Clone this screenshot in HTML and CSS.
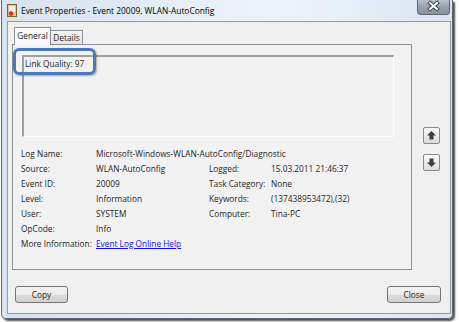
FILE: index.html
```html
<!DOCTYPE html>
<html>
<head>
<meta charset="utf-8">
<link rel="stylesheet" href="styles.css">
</head>
<body>
<div class="window">
  <div class="titlebar">
    <svg class="app-icon" width="10" height="13" viewBox="0 0 10 13">
      <rect x="0.5" y="0.5" width="9" height="12" fill="#d9c58e" stroke="#7d6428"/>
      <rect x="2" y="2" width="6" height="6" fill="#f4f0e6"/>
      <circle cx="4" cy="9.5" r="2.2" fill="#d8262b"/>
    </svg>
    <span class="title">Event Properties - Event 20009, WLAN-AutoConfig</span>
    <div class="close-btn">
      <svg width="33" height="15" viewBox="0 0 33 15">
        <path d="M13 4 L20 10 M20 4 L13 10" stroke="#3b4048" stroke-width="4" stroke-linecap="square"/>
        <path d="M13 4 L20 10 M20 4 L13 10" stroke="#ffffff" stroke-width="2" stroke-linecap="square"/>
      </svg>
    </div>
  </div>
  <div class="client">
    <div class="main">
      <div class="tabs-area">
        <div class="tabstrip">
          <div class="tab active">General</div>
          <div class="tab">Details</div>
        </div>
        <div class="panel">
          <div class="desc">Link Quality: 97</div>
          <div class="fields">
            <span class="lbl">Log Name:</span><span class="val span3">Microsoft-Windows-WLAN-AutoConfig/Diagnostic</span>
            <span class="lbl">Source:</span><span class="val">WLAN-AutoConfig</span><span class="lbl">Logged:</span><span class="val">15.03.2011 21:46:37</span>
            <span class="lbl">Event ID:</span><span class="val">20009</span><span class="lbl">Task Category:</span><span class="val">None</span>
            <span class="lbl">Level:</span><span class="val">Information</span><span class="lbl">Keywords:</span><span class="val">(137438953472),(32)</span>
            <span class="lbl">User:</span><span class="val">SYSTEM</span><span class="lbl">Computer:</span><span class="val">Tina-PC</span>
            <span class="lbl">OpCode:</span><span class="val span3">Info</span>
            <span class="lbl">More Information:</span><span class="val span3"><a class="link" href="#">Event Log Online Help</a></span>
          </div>
          <div class="highlight"></div>
        </div>
      </div>
      <div class="nav">
        <div class="nav-btn">
          <svg width="9" height="9" viewBox="0 0 9 9"><polygon points="4.5,0 9,4.5 6.5,4.5 6.5,8.5 2.5,8.5 2.5,4.5 0,4.5" fill="#3e3e3e"/></svg>
        </div>
        <div class="nav-btn">
          <svg width="9" height="9" viewBox="0 0 9 9"><polygon points="4.5,9 9,4.5 6.5,4.5 6.5,0.5 2.5,0.5 2.5,4.5 0,4.5" fill="#3e3e3e"/></svg>
        </div>
      </div>
    </div>
    <div class="buttons">
      <div class="btn copy">Copy</div>
      <div class="btn close">Close</div>
    </div>
  </div>
</div>
</body>
</html>
```

FILE: styles.css
```css
* { box-sizing: border-box; }
html, body {
  margin: 0;
  padding: 0;
  width: 459px;
  height: 322px;
  overflow: hidden;
  background: #ffffff;
}
body {
  font-family: "Open Sans", "Noto Sans", sans-serif;
  font-size: 8.3px;
  color: #1e1e1e;
}
.window {
  margin-left: 1px;
  width: 452px;
  height: 319px;
  border: 1px solid #5c6672;
  border-top: none;
  border-radius: 0 0 5px 5px;
  background: linear-gradient(90deg, #d7e3ef 0%, #e6eef7 40%, #eef4fa 60%, #dbe6f1 100%);
  box-shadow: 2px 2px 2px rgba(0, 0, 0, 0.7);
  display: flex;
  flex-direction: column;
}
.titlebar {
  height: 21px;
  display: flex;
  align-items: center;
  padding-left: 5px;
}
.app-icon { display: block; flex: none; }
.title {
  margin-left: 4px;
  color: #000;
  font-size: 8.4px;
}
.close-btn {
  margin-left: auto;
  margin-right: 2px;
  align-self: flex-start;
  width: 33px;
  height: 15px;
  border: 1px solid #5d6670;
  border-top: none;
  border-radius: 0 0 4px 4px;
  background: linear-gradient(#b9c0c9, #98a1ad 50%, #8a94a1);
}
.close-btn svg { display: block; margin: -1px 0 0 -1px; }
.client {
  margin: 0 1px 4px 5px;
  flex: 1;
  border: 1px solid #8f9bab;
  background: #f0f0f0;
  padding: 5px 9px 10px 4px;
  display: flex;
  flex-direction: column;
}
.main { display: flex; }
.tabs-area { width: 400px; }
.tabstrip {
  display: flex;
  align-items: flex-end;
  height: 17px;
  padding-left: 2px;
}
.tab {
  height: 14px;
  width: 32px;
  border: 1px solid #8c8f96;
  border-bottom: none;
  border-left: none;
  background: linear-gradient(#f4f4f4, #e4e4e4);
  display: flex;
  align-items: center;
  justify-content: center;
  line-height: 12px;
}
.tab.active {
  height: 18px;
  width: 37px;
  margin-bottom: -1px;
  border-left: 1px solid #8c8f96;
  background: #f9f9f9;
  position: relative;
  z-index: 1;
  padding-bottom: 2px;
}
.panel {
  height: 226px;
  border: 1px solid #8c8f96;
  background: #f2f2f2;
  position: relative;
  padding: 10px 0 0 9px;
}
.desc {
  width: 372px;
  height: 82px;
  border-top: 2px solid #a0a0a0;
  border-left: 2px solid #a0a0a0;
  border-right: 1px solid #fcfcfc;
  border-bottom: 1px solid #fcfcfc;
  padding: 0 0 0 1px;
  line-height: 13px;
}
.fields {
  margin-top: 9px;
  margin-left: -1px;
  display: grid;
  grid-template-columns: 75px 113px 62px auto;
  line-height: 15px;
  white-space: nowrap;
}
.span3 { grid-column: span 3; }
.link { color: #1414e6; text-decoration: underline; }
.highlight {
  position: absolute;
  left: 0;
  top: 3px;
  width: 83px;
  height: 27px;
  border: 3px solid #4a79b6;
  border-radius: 6px;
  box-shadow: 1px 1px 2px rgba(0, 0, 0, 0.3);
}
.nav {
  margin-left: 11px;
  margin-top: 100px;
  display: flex;
  flex-direction: column;
  gap: 10px;
}
.nav-btn {
  width: 17px;
  height: 17px;
  border: 1px solid #8a8a8a;
  border-radius: 2px;
  background: linear-gradient(#fbfbfb, #ececec 50%, #dcdcdc);
  display: flex;
  align-items: center;
  justify-content: center;
}
.nav-btn svg { display: block; }
.buttons {
  margin-top: auto;
  display: flex;
  justify-content: space-between;
  padding-left: 3px;
}
.btn {
  height: 17px;
  border: 1px solid #757575;
  border-radius: 3px;
  background: linear-gradient(#f4f4f4, #ebebeb 50%, #dcdcdc 51%, #d0d0d0);
  display: flex;
  align-items: center;
  justify-content: center;
  color: #1e1e1e;
}
.copy { width: 53px; }
.close { width: 54px; }
```
